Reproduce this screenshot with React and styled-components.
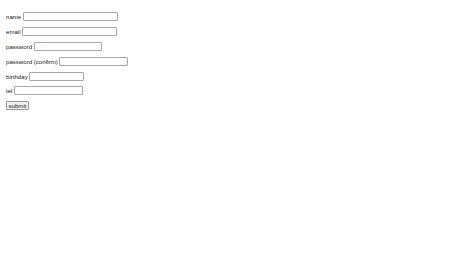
import styled, { createGlobalStyle } from 'styled-components';

const GlobalStyle = createGlobalStyle`
    body {
        margin: 0;
        background: #fff;
        font-family: "Liberation Sans", Arial, sans-serif;
        color: #222;
    }
`;

const Form = styled.form`
    display: flex;
    flex-direction: column;
    align-items: flex-start;
    gap: 5.9px;
    padding: 12px 0 0 6px;
`;

const Row = styled.div`
    display: flex;
    align-items: center;
    gap: 1.6px;
    height: 9px;
`;

const Label = styled.label`
    font-size: 6.1px;
    line-height: 9px;
    white-space: nowrap;
`;

const Field = styled.input`
    box-sizing: border-box;
    width: ${(p) => p.$width}px;
    height: 9px;
    margin: 0;
    padding: 0 2px;
    border: 1px solid #a8a8a8;
    border-radius: 1px;
    background: #fff;
    font-size: 5px;
    outline: none;
`;

const Submit = styled.button`
    box-sizing: border-box;
    width: 23px;
    height: 9px;
    margin: 0;
    padding: 0;
    border: 1px solid #999;
    border-radius: 1px;
    background: #efefef;
    font-family: "Liberation Sans", Arial, sans-serif;
    font-size: 6.1px;
    line-height: 7px;
    color: #222;
`;

const fields = [
    { id: 'name', label: 'name', type: 'text', width: 95 },
    { id: 'email', label: 'email', type: 'text', width: 95 },
    { id: 'password', label: 'password', type: 'password', width: 68 },
    { id: 'password-confirm', label: 'password (confirm)', type: 'password', width: 69 },
    { id: 'birthday', label: 'birthday', type: 'text', width: 55 },
    { id: 'tel', label: 'tel', type: 'text', width: 69 },
];

export default function App() {
    return (
        <>
            <GlobalStyle />
            <Form onSubmit={(e) => e.preventDefault()}>
                {fields.map((f) => (
                    <Row key={f.id}>
                        <Label htmlFor={f.id}>{f.label}</Label>
                        <Field id={f.id} type={f.type} $width={f.width} />
                    </Row>
                ))}
                <Submit type="submit">submit</Submit>
            </Form>
        </>
    );
}
